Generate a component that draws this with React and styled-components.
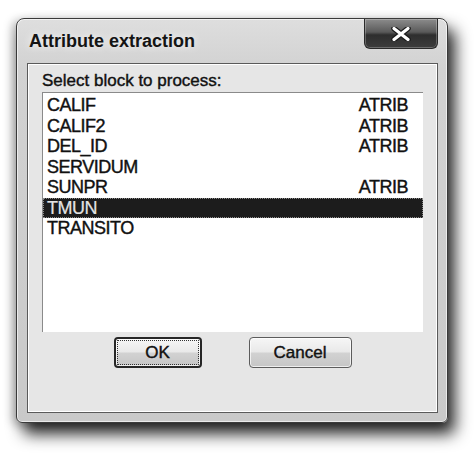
import styled, { createGlobalStyle } from "styled-components";

const GlobalStyle = createGlobalStyle`
  html, body {
    margin: 0;
    background: #ffffff;
    font-family: "Liberation Sans", Arial, sans-serif;
  }
`;

const Stage = styled.div`
  padding: 18px 26px 30px 16px;
`;

const Window = styled.div`
  width: 432px;
  height: 405px;
  box-sizing: border-box;
  display: flex;
  flex-direction: column;
  padding: 0 9px 9px 10px;
  border: 1px solid #3a3a3a;
  border-radius: 8px 8px 6px 6px;
  background: linear-gradient(180deg, #dedede 0%, #d2d2d2 12%, #c9c9c9 100%);
  box-shadow: 7px 11px 16px rgba(0, 0, 0, 0.85), -4px 2px 10px rgba(0, 0, 0, 0.25),
    inset 0 0 0 1px rgba(255, 255, 255, 0.6);
`;

const TitleBar = styled.div`
  height: 44px;
  display: flex;
  align-items: center;
  justify-content: space-between;
`;

const Title = styled.span`
  padding-left: 2px;
  font-size: 18px;
  font-weight: bold;
  color: #141414;
  text-shadow: 0 0 8px rgba(255, 255, 255, 0.95);
`;

const CloseButton = styled.div`
  align-self: flex-start;
  width: 74px;
  height: 30px;
  box-sizing: border-box;
  display: flex;
  align-items: center;
  justify-content: center;
  border: 1px solid #2a2a2a;
  border-top: none;
  border-radius: 0 0 6px 6px;
  background: linear-gradient(180deg, #8c8c8c 0%, #5a5a5a 45%, #2e2e2e 55%, #3c3c3c 100%);
  box-shadow: inset 0 0 0 1px rgba(255, 255, 255, 0.25);
`;

const Client = styled.div`
  flex: 1;
  display: flex;
  flex-direction: column;
  padding: 5px 14px 0 14px;
  background: #e6e6e6;
  border: 1px solid #5a5a5a;
  box-shadow: inset 0 0 0 1px #ffffff;
`;

const Label = styled.div`
  height: 23px;
  line-height: 23px;
  font-size: 17px;
  color: #111;
  -webkit-text-stroke: 0.4px #111;
`;

const ListBox = styled.div`
  height: 240px;
  box-sizing: border-box;
  padding-top: 2px;
  background: #ffffff;
  border-left: 1px solid #8a8a8a;
  border-top: 1px solid #8a8a8a;
`;

const Row = styled.div`
  height: 20.5px;
  line-height: 20.5px;
  display: flex;
  justify-content: space-between;
  padding: 0 15px 0 4px;
  font-size: 18px;
  letter-spacing: -0.5px;
  color: ${(p) => (p.selected ? "#e4e4e4" : "#111")};
  -webkit-text-stroke: ${(p) => (p.selected ? "0.2px #e4e4e4" : "0.4px #111")};
  background: ${(p) => (p.selected ? "#1c1c1c" : "transparent")};
  outline: ${(p) => (p.selected ? "1px dotted #8a8a8a" : "none")};
  outline-offset: -1px;
`;

const ButtonRow = styled.div`
  display: flex;
  justify-content: center;
  gap: 47px;
  margin-top: 5px;
`;

const Button = styled.button`
  width: ${(p) => p.w}px;
  height: 31px;
  box-sizing: border-box;
  padding: 0;
  font-family: "Liberation Sans", Arial, sans-serif;
  font-size: 17px;
  color: #111;
  -webkit-text-stroke: 0.4px #111;
  border-radius: 4px;
  border: ${(p) => (p.primary ? "2px solid #262626" : "1px solid #5c5c5c")};
  background: linear-gradient(180deg, #f6f6f6 0%, #e9e9e9 48%, #d2d2d2 52%, #c6c6c6 100%);
  box-shadow: inset 0 0 0 1px rgba(255, 255, 255, 0.7);
  outline: ${(p) => (p.primary ? "1px dotted #333" : "none")};
  outline-offset: -4px;
`;

const items = [
  { name: "CALIF", type: "ATRIB" },
  { name: "CALIF2", type: "ATRIB" },
  { name: "DEL_ID", type: "ATRIB" },
  { name: "SERVIDUM", type: "" },
  { name: "SUNPR", type: "ATRIB" },
  { name: "TMUN", type: "" },
  { name: "TRANSITO", type: "" },
];

const CloseIcon = () => (
  <svg width="20" height="14" viewBox="0 0 20 14">
    <path d="M3 1.5 L17 12.5 M17 1.5 L3 12.5" stroke="#1a1a1a" strokeWidth="5.5" strokeLinecap="round" />
    <path d="M3 1.5 L17 12.5 M17 1.5 L3 12.5" stroke="#ffffff" strokeWidth="3.2" strokeLinecap="round" />
  </svg>
);

const App = () => {
  return (
    <Stage>
      <GlobalStyle />
      <Window>
        <TitleBar>
          <Title>Attribute extraction</Title>
          <CloseButton>
            <CloseIcon />
          </CloseButton>
        </TitleBar>
        <Client>
          <Label>Select block to process:</Label>
          <ListBox>
            {items.map((item) => (
              <Row key={item.name} selected={item.name === "TMUN"}>
                <span>{item.name}</span>
                <span>{item.type}</span>
              </Row>
            ))}
          </ListBox>
          <ButtonRow>
            <Button w={88} primary>OK</Button>
            <Button w={103}>Cancel</Button>
          </ButtonRow>
        </Client>
      </Window>
    </Stage>
  );
};

export default App;
